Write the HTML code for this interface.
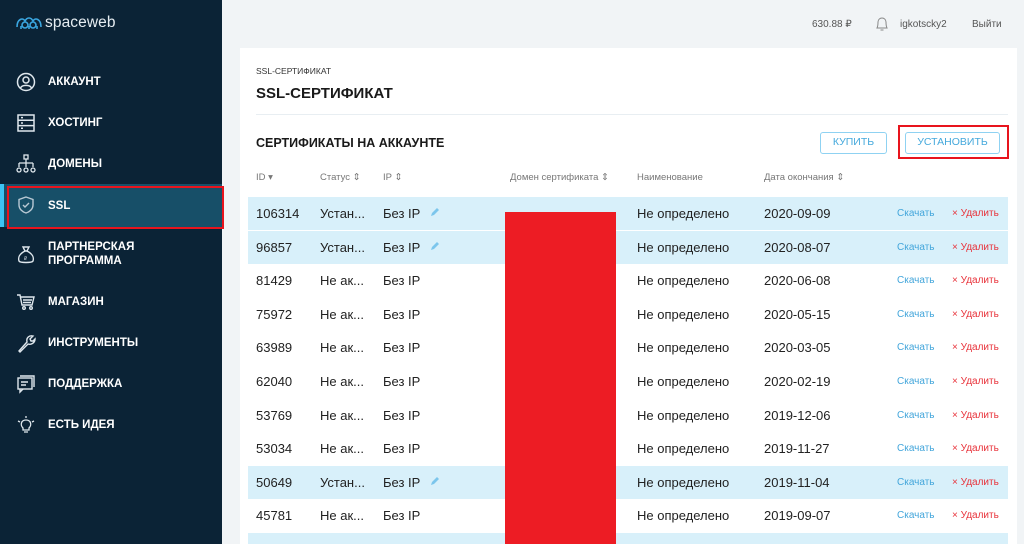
<!DOCTYPE html>
<html style="overflow:hidden;width:1024px;height:544px"><head><meta charset="utf-8"><style>
*{margin:0;padding:0;box-sizing:border-box}
body{width:1024px;height:544px;overflow:hidden;background:#f1f4f6;font-family:"Liberation Sans","Noto Sans CJK SC",sans-serif;position:relative}
.sb{position:absolute;left:0;top:0;width:222px;height:544px;background:#0b2336}
.logo{position:absolute;left:45px;top:14px;color:#e6edf2;font-size:15.5px;letter-spacing:0.1px}
.nav{position:absolute;left:48px;color:#fff;font-weight:bold;font-size:11.5px;line-height:14px}
.ic{position:absolute;left:16px;width:20px;height:20px}
.active{position:absolute;left:0;top:184px;width:222px;height:43px;background:#174f68}
.bar{position:absolute;left:0;top:184px;width:4px;height:43px;background:#3cc3f4}
.redo{position:absolute;border:2px solid #e8141d}
.top{position:absolute;top:19px;font-size:10px;color:#555}
.card{position:absolute;left:240px;top:48px;width:777px;height:496px;background:#fff}
.t{position:absolute;white-space:nowrap}
.row{position:absolute;left:248px;width:760px;height:33px}
.hl{background:#d8f0fa}
.c{position:absolute;top:9px;font-size:13px;color:#222}
.dl{position:absolute;top:11px;font-size:10px;color:#43a6db;left:649px}
.rm{position:absolute;top:11px;font-size:10px;color:#e8323a;left:704px}
.th{position:absolute;top:172px;font-size:9.5px;color:#777}
.btn{position:absolute;border:1.5px solid #8fd2f2;border-radius:3px;color:#45a9dc;font-size:10.5px;text-align:center;line-height:19px;white-space:nowrap}
#rows{position:absolute;left:0;top:0;width:1024px;height:544px;overflow:hidden}
</style></head><body>
<div class="sb">
<svg style="position:absolute;left:15px;top:15px" width="28" height="16" viewBox="0 0 28 16" fill="none" stroke="#3aa6e0" stroke-width="1.6"><path d="M2 12 C2 4 8 2 10 6 C12 2 16 2 18 6 C20 2 26 4 26 12"/><circle cx="10" cy="10" r="3"/><circle cx="18" cy="10" r="3"/><path d="M6 14 v-3 M22 14 v-3 M14 14 v-3"/></svg>
<div class="logo">spaceweb</div>
<div class="active"></div><div class="bar"></div>
<svg class="ic" style="top:72px" viewBox="0 0 20 20" fill="none" stroke="#dfe7ed" stroke-width="1.5"><circle cx="10" cy="10" r="8.5"/><circle cx="10" cy="8" r="3"/><path d="M4.5 16 C6 12.5 14 12.5 15.5 16"/></svg>
<div class="nav" style="top:75px">АККАУНТ</div>
<svg class="ic" style="top:113px" viewBox="0 0 20 20" fill="none" stroke="#dfe7ed" stroke-width="1.5"><rect x="2" y="2" width="16" height="16"/><path d="M2 7.3h16M2 12.6h16M5 4.6h2M5 10h2M5 15.3h2"/></svg>
<div class="nav" style="top:116px">ХОСТИНГ</div>
<svg class="ic" style="top:154px" viewBox="0 0 20 20" fill="none" stroke="#dfe7ed" stroke-width="1.3"><rect x="8" y="1" width="4" height="4"/><path d="M10 5v4M3 9h14M3 9v4M10 9v4M17 9v4"/><circle cx="3" cy="16" r="2"/><circle cx="10" cy="16" r="2"/><circle cx="17" cy="16" r="2"/></svg>
<div class="nav" style="top:157px">ДОМЕНЫ</div>
<svg class="ic" style="top:195px" viewBox="0 0 20 20" fill="none" stroke="#b9c9d4" stroke-width="1.4"><path d="M10 2 L17 4.5 V10 C17 14 13.5 17 10 18 C6.5 17 3 14 3 10 V4.5 Z"/><path d="M7 10 l2 2 l4 -4"/></svg>
<div class="nav" style="top:199px">SSL</div>
<svg class="ic" style="top:245px" viewBox="0 0 20 20" fill="none" stroke="#dfe7ed" stroke-width="1.4"><path d="M7 2h6l-2 4h-2z"/><path d="M9 6 C3 9 2 13 3 16 C4 18 16 18 17 16 C18 13 17 9 11 6"/><text x="8" y="15" font-size="5" fill="#dfe7ed" stroke="none">₽</text></svg>
<div class="nav" style="top:240px">ПАРТНЕРСКАЯ<br>ПРОГРАММА</div>
<svg class="ic" style="top:292px" viewBox="0 0 20 20" fill="none" stroke="#dfe7ed" stroke-width="1.4"><path d="M1 3h3l2 10h10l2-8H5"/><circle cx="8" cy="16" r="1.3"/><circle cx="15" cy="16" r="1.3"/><path d="M7 8h9M7 10.5h8"/></svg>
<div class="nav" style="top:295px">МАГАЗИН</div>
<svg class="ic" style="top:333px" viewBox="0 0 20 20" fill="none" stroke="#dfe7ed" stroke-width="1.4"><path d="M3 18 L11 9 C10 5 13 2 17 3 L14 6 L15 8 L17 8 L19 6 C19 10 15 12 12 11 L4 19 Z"/></svg>
<div class="nav" style="top:336px">ИНСТРУМЕНТЫ</div>
<svg class="ic" style="top:374px" viewBox="0 0 20 20" fill="none" stroke="#dfe7ed" stroke-width="1.4"><rect x="2" y="4" width="14" height="11"/><path d="M4 2h14v11M5 8h7M5 11h5M4 15v3l3-3"/></svg>
<div class="nav" style="top:377px">ПОДДЕРЖКА</div>
<svg class="ic" style="top:415px" viewBox="0 0 20 20" fill="none" stroke="#dfe7ed" stroke-width="1.3"><path d="M7 13 C4 10 5 5 10 5 C15 5 16 10 13 13 V15 H7 Z M8 17h4M2 6l2 1M18 6l-2 1M10 1v2"/></svg>
<div class="nav" style="top:418px">ЕСТЬ ИДЕЯ</div>
</div>
<div class="redo" style="left:7px;top:186px;width:217px;height:43px"></div>
<div class="top" style="left:812px">630.88 ₽</div>
<svg style="position:absolute;left:875px;top:17px" width="14" height="15" viewBox="0 0 14 15" fill="none" stroke="#888" stroke-width="1"><path d="M2 11 C3 9 3 7 3 5 C3 2.5 5 1 7 1 C9 1 11 2.5 11 5 C11 7 11 9 12 11 Z M5.5 13h3"/></svg>
<div class="top" style="left:900px">igkotscky2</div>
<div class="top" style="left:972px">Выйти</div>
<div class="card"></div>
<div class="t" style="left:256px;top:66px;font-size:8.5px;color:#333">SSL-СЕРТИФИКАТ</div>
<div class="t" style="left:256px;top:85px;font-size:15px;font-weight:bold;color:#1a1a1a">SSL-СЕРТИФИКАТ</div>
<div style="position:absolute;left:256px;top:114px;width:752px;height:1px;background:#e8eef2"></div>
<div class="t" style="left:256px;top:136px;font-size:12.5px;font-weight:bold;color:#1a1a1a">СЕРТИФИКАТЫ НА АККАУНТЕ</div>
<div class="btn" style="left:820px;top:132px;width:67px;height:22px">КУПИТЬ</div>
<div class="btn" style="left:905px;top:132px;width:95px;height:22px">УСТАНОВИТЬ</div>
<div class="redo" style="left:898px;top:125px;width:111px;height:34px"></div>
<div class="th" style="left:256px">ID ▾</div>
<div class="th" style="left:320px">Статус ⇕</div>
<div class="th" style="left:383px">IP ⇕</div>
<div class="th" style="left:510px">Домен сертификата ⇕</div>
<div class="th" style="left:637px">Наименование</div>
<div class="th" style="left:764px">Дата окончания ⇕</div>
<div id="rows"></div>
<script>
var d=[["106314","Устан...","2020-09-09",1],["96857","Устан...","2020-08-07",1],["81429","Не ак...","2020-06-08",0],["75972","Не ак...","2020-05-15",0],["63989","Не ак...","2020-03-05",0],["62040","Не ак...","2020-02-19",0],["53769","Не ак...","2019-12-06",0],["53034","Не ак...","2019-11-27",0],["50649","Устан...","2019-11-04",1],["45781","Не ак...","2019-09-07",0],["","","",1]];
var h="";d.forEach(function(r,i){var y=197+i*33.6;h+='<div class="row'+(r[3]?' hl':'')+'" style="top:'+y+'px">';
if(r[0]){h+='<div class="c" style="left:8px">'+r[0]+'</div><div class="c" style="left:72px">'+r[1]+'</div><div class="c" style="left:135px">Без IP</div>';
if(r[3])h+='<svg style="position:absolute;left:182px;top:10px" width="10" height="10" viewBox="0 0 10 10"><path d="M1 9 L2 6 L7 1 L9 3 L4 8 Z" fill="#7cc6ec"/></svg>';
h+='<div class="c" style="left:389px">Не определено</div><div class="c" style="left:516px">'+r[2]+'</div><div class="dl">Скачать</div><div class="rm">× Удалить</div>';}
h+='</div>';});
h+='<div style="position:absolute;left:505px;top:212px;width:111px;height:332px;background:#ed1c24"></div>';
document.getElementById("rows").innerHTML=h;
</script>
</body></html>
